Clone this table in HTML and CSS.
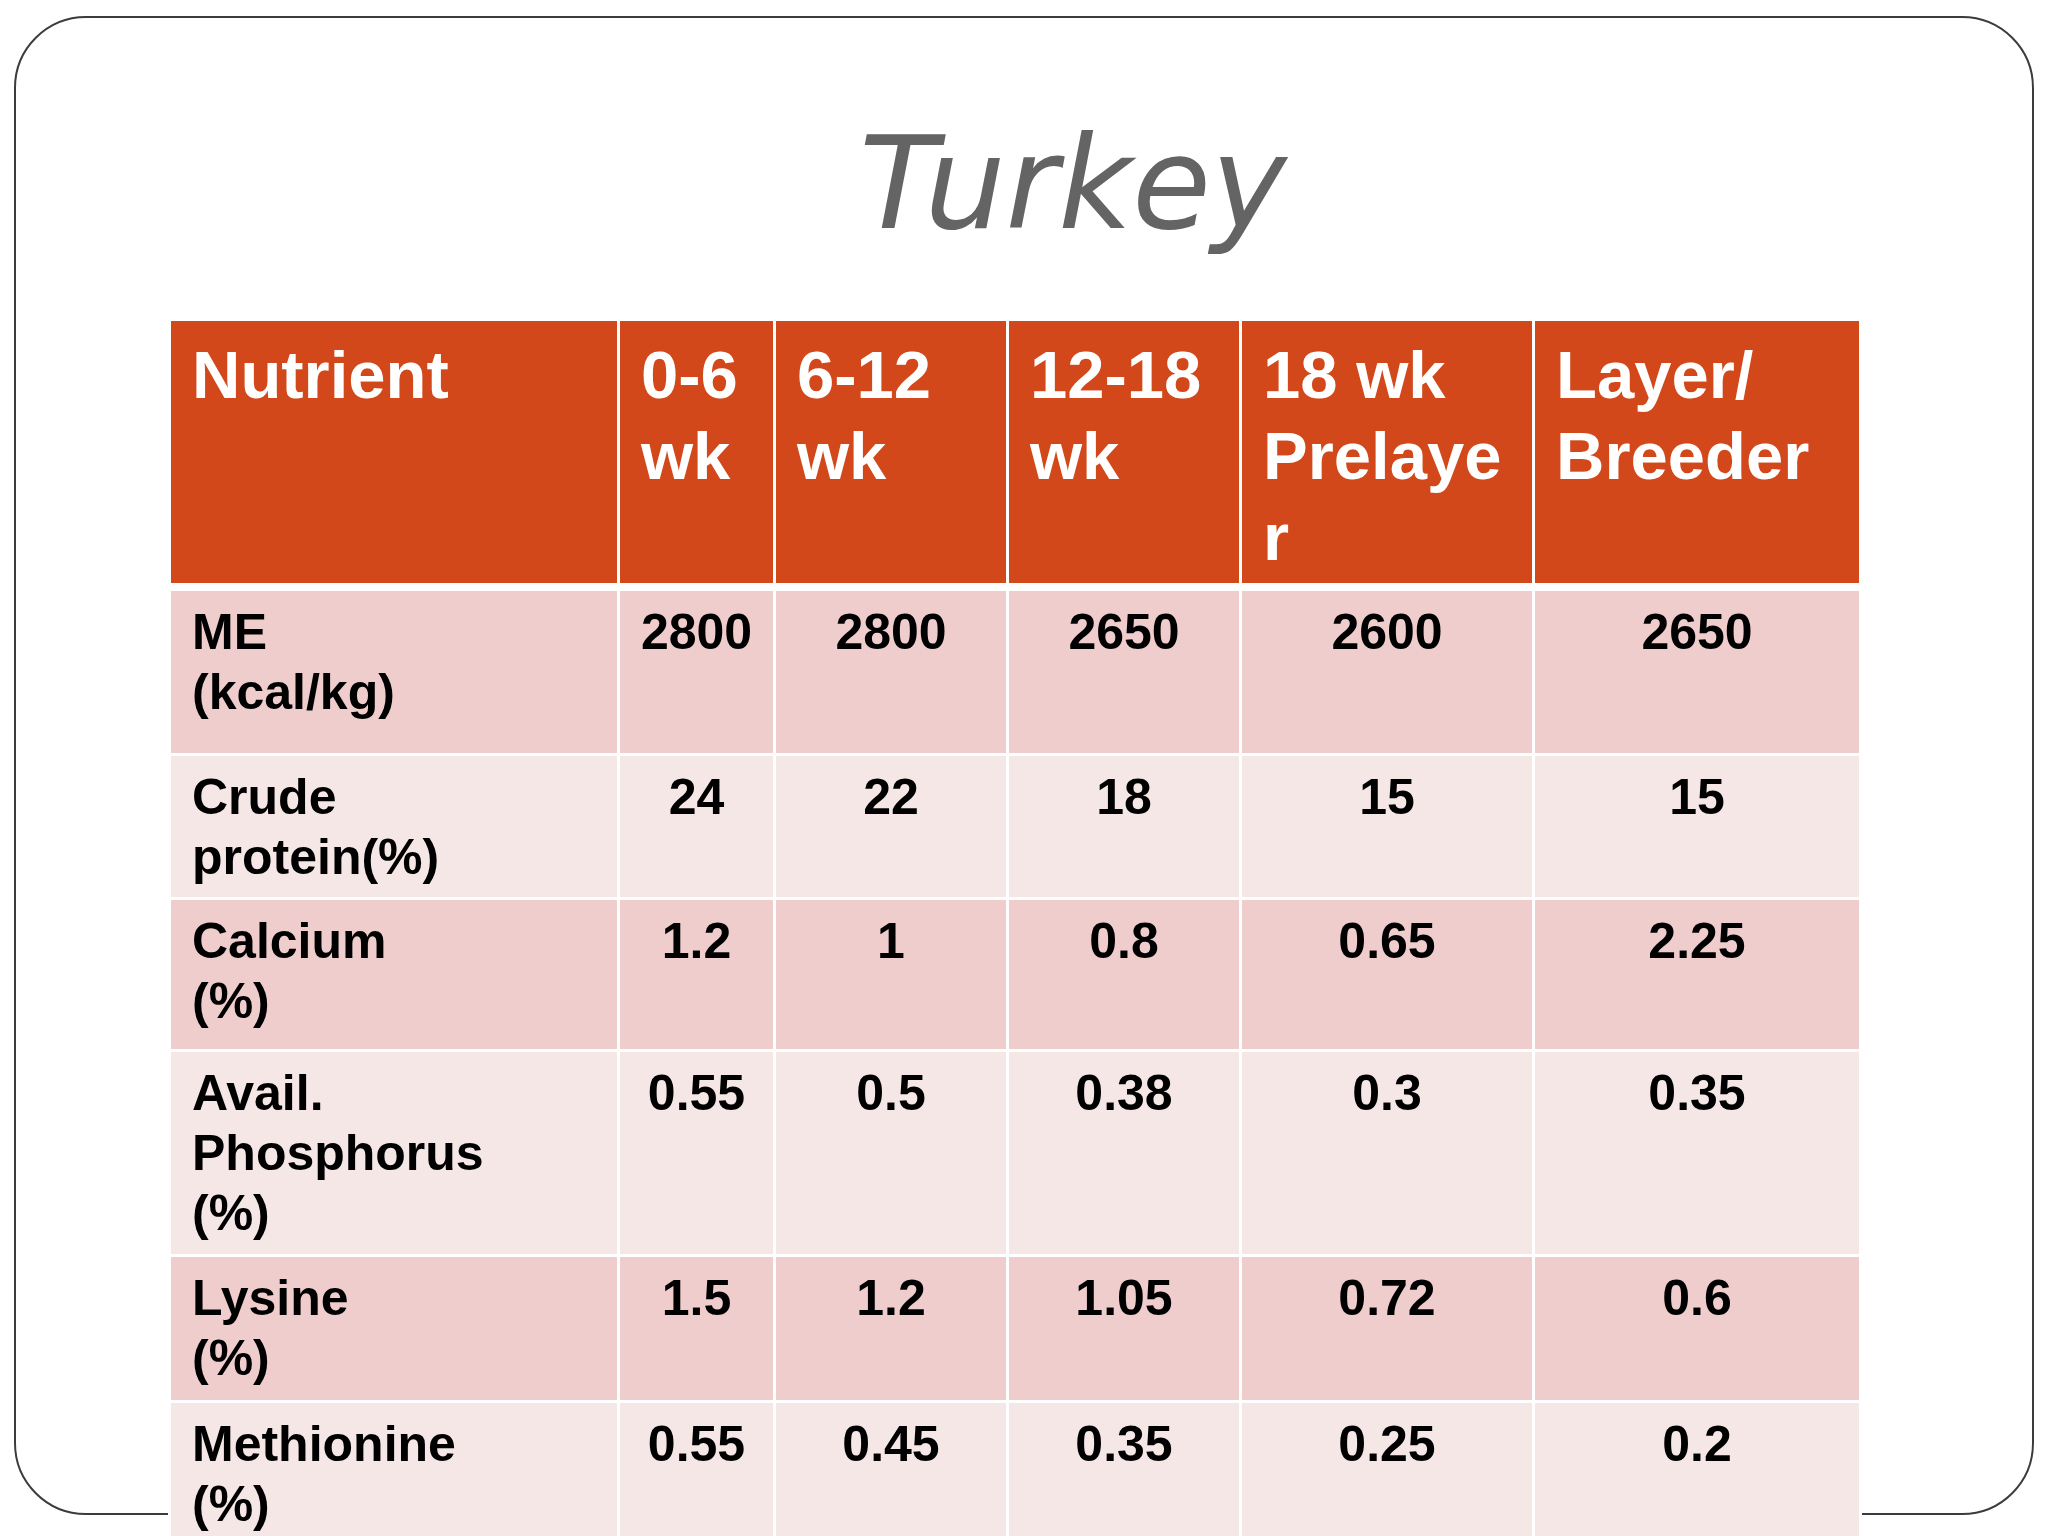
FILE: index.html
```html
<!DOCTYPE html>
<html lang="en">
<head>
<meta charset="utf-8">
<title>Turkey</title>
<link rel="stylesheet" href="styles.css">
</head>
<body>
<div class="slide">
  <h1 class="title">Turkey</h1>
  <table class="nutrients">
    <thead>
      <tr>
        <th class="c1">Nutrient</th>
        <th class="c2">0-6 wk</th>
        <th class="c3">6-12 wk</th>
        <th class="c4">12-18 wk</th>
        <th class="c5">18 wk Prelayer</th>
        <th class="c6">Layer/ Breeder</th>
      </tr>
    </thead>
    <tbody>
      <tr class="dark h-me">
        <td>ME<br>(kcal/kg)</td><td>2800</td><td>2800</td><td>2650</td><td>2600</td><td>2650</td>
      </tr>
      <tr class="light h-cp">
        <td>Crude<br>protein(%)</td><td>24</td><td>22</td><td>18</td><td>15</td><td>15</td>
      </tr>
      <tr class="dark h-ca">
        <td>Calcium<br>(%)</td><td>1.2</td><td>1</td><td>0.8</td><td>0.65</td><td>2.25</td>
      </tr>
      <tr class="light h-ph">
        <td>Avail.<br>Phosphorus<br>(%)</td><td>0.55</td><td>0.5</td><td>0.38</td><td>0.3</td><td>0.35</td>
      </tr>
      <tr class="dark h-ly">
        <td>Lysine<br>(%)</td><td>1.5</td><td>1.2</td><td>1.05</td><td>0.72</td><td>0.6</td>
      </tr>
      <tr class="light h-me2">
        <td>Methionine<br>(%)</td><td>0.55</td><td>0.45</td><td>0.35</td><td>0.25</td><td>0.2</td>
      </tr>
    </tbody>
  </table>
</div>
</body>
</html>
```

FILE: styles.css
```css
html {
  height: 1536px;
  overflow: hidden;
  background: #ffffff;
}

body {
  margin: 0;
  padding: 0;
  height: 1536px;
  overflow: hidden;
  background: #ffffff;
  font-family: "Liberation Sans", Arial, sans-serif;
}

.slide {
  box-sizing: border-box;
  margin: 16px 0 0 14px;
  width: 2020px;
  height: 1499px;
  border: 2px solid #3c3c3c;
  border-radius: 72px;
  background: #ffffff;
}

.title {
  margin: 91px 0 0 0;
  padding-left: 98px;
  text-align: center;
  font-family: "DejaVu Sans", sans-serif;
  font-style: oblique;
  font-weight: normal;
  font-size: 128px;
  line-height: 150px;
  color: #646464;
}

.nutrients {
  margin: 59px 0 0 152px;
  width: 1694px;
  table-layout: fixed;
  border-collapse: separate;
  border-spacing: 3px;
  background: #ffffff;
  font-weight: bold;
}

.nutrients th,
.nutrients td {
  box-sizing: border-box;
  padding: 11px 19px 0 19px;
  vertical-align: top;
}

.nutrients th {
  height: 267px;
  padding: 13px 17px 0 21px;
  border-bottom: 5px solid #ffffff;
  background: #d2481a;
  color: #ffffff;
  font-size: 67px;
  line-height: 81px;
  text-align: left;
  overflow-wrap: anywhere;
}

.c1 { width: 446px; }
.c2 { width: 153px; }
.c3 { width: 230px; }
.c4 { width: 230px; }
.c5 { width: 290px; }
.c6 { width: 324px; }

.nutrients td {
  font-size: 50px;
  line-height: 60px;
  color: #000000;
  text-align: center;
}

.nutrients td:first-child {
  padding-left: 21px;
  padding-right: 17px;
  text-align: left;
}

.dark td { background: #efcdcd; }
.light td { background: #f6e7e7; }

.h-me td { height: 162px; }
.h-cp td { height: 141px; }
.h-ca td { height: 149px; }
.h-ph td { height: 202px; }
.h-ly td { height: 143px; }
.h-me2 td { height: 150px; }
```
